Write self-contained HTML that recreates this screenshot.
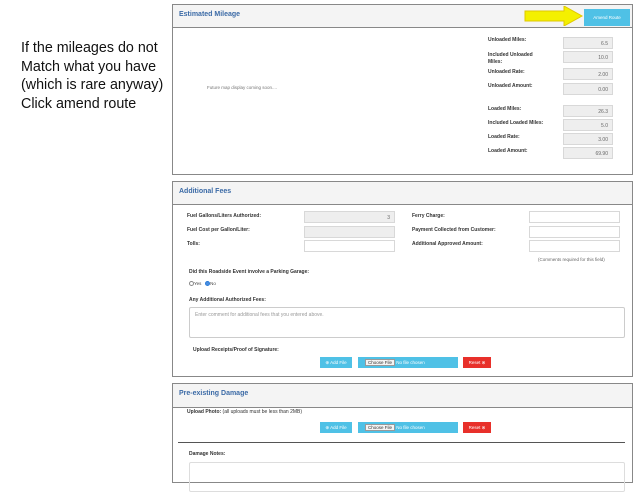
<!DOCTYPE html>
<html><head><meta charset="utf-8"><style>
*{box-sizing:border-box;margin:0;padding:0}
body{width:638px;height:478px;background:#fff;position:relative;overflow:hidden;font-family:"Liberation Sans",sans-serif}
.a{position:absolute}
.lt{position:absolute;left:21px;top:39px;font-size:14.3px;line-height:18.5px;color:#111}
.panel{position:absolute;left:172px;width:461px;border:1.5px solid #888;background:#fff}
.hd{position:absolute;left:0;right:0;top:0;background:#f4f4f4;border-bottom:1.5px solid #888;font-size:7px;font-weight:bold;color:#3b6aa6;padding:6px 6px}
.l{position:absolute;font-size:5px;font-weight:bold;color:#333}
.in{position:absolute;border:1px solid #d8d8d8;background:#fff;font-size:5px;color:#666;text-align:right;padding:3px 4px;height:12px}
.g{background:#eee}
.btn{position:absolute;height:11px;font-size:4.5px;color:#fff;text-align:center;line-height:11px}
</style></head><body>
<div class="lt">If the mileages do not<br>Match what you have<br>(which is rare anyway)<br>Click amend route</div>

<div class="panel" style="top:4px;height:171px">
 <div class="hd" style="height:23px">Estimated Mileage</div>
</div>
<svg class="a" style="left:524px;top:6px" width="60" height="20"><polygon points="1,5 40,5 40,0 58,10 40,20 40,15 1,15" fill="#f4f000" stroke="#e0c800" stroke-width="1"/></svg>
<div class="btn" style="left:584px;top:9px;width:46px;height:17px;line-height:17px;background:#4fc1e6">Amend Route</div>
<div class="a" style="left:207px;top:85px;font-size:4.5px;color:#777">Future map display coming soon....</div>
<div class="l" style="left:488px;top:37px">Unloaded Miles:</div>
<div class="l" style="left:488px;top:52px;line-height:7px">Included Unloaded<br>Miles:</div>
<div class="l" style="left:488px;top:69px">Unloaded Rate:</div>
<div class="l" style="left:488px;top:83px">Unloaded Amount:</div>
<div class="l" style="left:488px;top:106px">Loaded Miles:</div>
<div class="l" style="left:488px;top:120px">Included Loaded Miles:</div>
<div class="l" style="left:488px;top:134px">Loaded Rate:</div>
<div class="l" style="left:488px;top:148px">Loaded Amount:</div>
<div class="in g" style="left:563px;top:37px;width:50px">6.5</div>
<div class="in g" style="left:563px;top:51px;width:50px">10.0</div>
<div class="in g" style="left:563px;top:68px;width:50px">2.00</div>
<div class="in g" style="left:563px;top:83px;width:50px">0.00</div>
<div class="in g" style="left:563px;top:105px;width:50px">26.3</div>
<div class="in g" style="left:563px;top:119px;width:50px">5.0</div>
<div class="in g" style="left:563px;top:133px;width:50px">3.00</div>
<div class="in g" style="left:563px;top:147px;width:50px">69.90</div>

<div class="panel" style="top:181px;height:196px">
 <div class="hd" style="height:23px">Additional Fees</div>
</div>
<div class="l" style="left:187px;top:213px">Fuel Gallons/Liters Authorized:</div>
<div class="l" style="left:187px;top:227px">Fuel Cost per Gallon/Liter:</div>
<div class="l" style="left:187px;top:241px">Tolls:</div>
<div class="in g" style="left:304px;top:211px;width:91px">3</div>
<div class="in g" style="left:304px;top:226px;width:91px"></div>
<div class="in" style="left:304px;top:240px;width:91px"></div>
<div class="l" style="left:412px;top:213px">Ferry Charge:</div>
<div class="l" style="left:412px;top:227px">Payment Collected from Customer:</div>
<div class="l" style="left:412px;top:241px">Additional Approved Amount:</div>
<div class="in" style="left:529px;top:211px;width:91px"></div>
<div class="in" style="left:529px;top:226px;width:91px"></div>
<div class="in" style="left:529px;top:240px;width:91px"></div>
<div class="a" style="left:538px;top:257px;font-size:4.5px;color:#666">(Comments required for this field)</div>
<div class="l" style="left:189px;top:269px">Did this Roadside Event involve a Parking Garage:</div>
<div class="a" style="left:189px;top:281px;font-size:4.5px;color:#444"><span style="display:inline-block;width:5px;height:5px;border:1px solid #888;border-radius:50%;vertical-align:middle"></span>Yes &nbsp; <span style="display:inline-block;width:5px;height:5px;border:1.5px solid #2a7ad8;background:#4a8fe0;border-radius:50%;vertical-align:middle"></span>No</div>
<div class="l" style="left:189px;top:297px">Any Additional Authorized Fees:</div>
<div class="a" style="left:189px;top:307px;width:436px;height:31px;border:1px solid #ccc;border-radius:2px;font-size:5px;color:#999;padding:4px 5px">Enter comment for additional fees that you entered above.</div>
<div class="l" style="left:193px;top:347px">Upload Receipts/Proof of Signature:</div>
<div class="btn" style="left:320px;top:357px;width:32px;background:#4fc1e6">⊕ Add File</div>
<div class="btn" style="left:358px;top:357px;width:100px;background:#4fc1e6;text-align:left;padding-left:7px"><span style="background:#f4f4f4;color:#333;border:1px solid #999;padding:0 2px">Choose File</span> No file chosen</div>
<div class="btn" style="left:463px;top:357px;width:28px;background:#e8302a">Reset ⊗</div>

<div class="panel" style="top:383px;height:100px">
 <div class="hd" style="height:24px">Pre-existing Damage</div>
</div>
<div class="a" style="left:187px;top:409px;font-size:5px;color:#333"><b>Upload Photo:</b> (all uploads must be less than 2MB)</div>
<div class="btn" style="left:320px;top:422px;width:32px;background:#4fc1e6">⊕ Add File</div>
<div class="btn" style="left:358px;top:422px;width:100px;background:#4fc1e6;text-align:left;padding-left:7px"><span style="background:#f4f4f4;color:#333;border:1px solid #999;padding:0 2px">Choose File</span> No file chosen</div>
<div class="btn" style="left:463px;top:422px;width:28px;background:#e8302a">Reset ⊗</div>
<div class="a" style="left:178px;top:442px;width:447px;height:1px;background:#555"></div>
<div class="l" style="left:189px;top:451px">Damage Notes:</div>
<div class="a" style="left:189px;top:462px;width:436px;height:30px;border:1px solid #ddd;border-radius:2px"></div>
</body></html>
